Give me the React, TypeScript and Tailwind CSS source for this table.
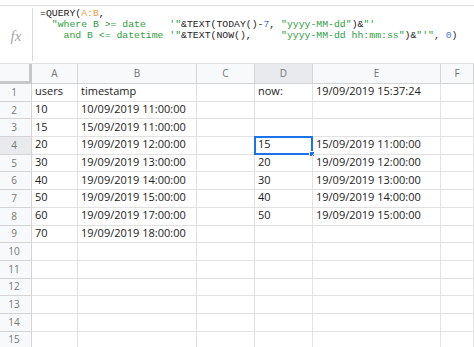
import React from 'react';

const cols = ['A', 'B', 'C', 'D', 'E', 'F'];

const rows: string[][] = [
    ['users', 'timestamp', '', 'now:', '19/09/2019 15:37:24', ''],
    ['10', '10/09/2019 11:00:00', '', '', '', ''],
    ['15', '15/09/2019 11:00:00', '', '', '', ''],
    ['20', '19/09/2019 12:00:00', '', '15', '15/09/2019 11:00:00', ''],
    ['30', '19/09/2019 13:00:00', '', '20', '19/09/2019 12:00:00', ''],
    ['40', '19/09/2019 14:00:00', '', '30', '19/09/2019 13:00:00', ''],
    ['50', '19/09/2019 15:00:00', '', '40', '19/09/2019 14:00:00', ''],
    ['60', '19/09/2019 17:00:00', '', '50', '19/09/2019 15:00:00', ''],
    ['70', '19/09/2019 18:00:00', '', '', '', ''],
    ['', '', '', '', '', ''],
    ['', '', '', '', '', ''],
    ['', '', '', '', '', ''],
    ['', '', '', '', '', ''],
    ['', '', '', '', '', ''],
    ['', '', '', '', '', ''],
];

const FormulaBar = () => (
    <div className="flex h-[59px] border-y border-[#e0e0e0] bg-white">
        <div className="w-[32px] flex items-center justify-center pt-[4px]">
            <span className="text-[#a6a6a6] italic text-[15px] font-['Liberation_Serif',serif]">fx</span>
        </div>
        <div className="my-[2px] border-l border-[#dadada]" />
        <pre className="pl-[7px] pt-[2px] text-[9.8px] leading-[11px] font-['Liberation_Mono',monospace] text-[#222]">
            {'=QUERY('}<span className="text-[#f29b38]">A:B</span>{','}
            {'\n'}
            <span className="text-[#2f9e44]">{'  "where B >= date    \'"'}</span>
            {'&TEXT(TODAY()-'}<span className="text-[#4a73d6]">7</span>{', '}
            <span className="text-[#2f9e44]">{'"yyyy-MM-dd"'}</span>{')&'}
            <span className="text-[#2f9e44]">{'"\''}</span>
            {'\n'}
            <span className="text-[#2f9e44]">{'    and B <= datetime \'"'}</span>
            {'&TEXT(NOW(),     '}
            <span className="text-[#2f9e44]">{'"yyyy-MM-dd hh:mm:ss"'}</span>{')&'}
            <span className="text-[#2f9e44]">{'"\'"'}</span>{', '}
            <span className="text-[#4a73d6]">0</span>{')'}
        </pre>
    </div>
);

export default function App() {
    return (
        <div className="w-[474px] h-[347px] overflow-hidden bg-white pt-[5px]">
            <FormulaBar />
            <div className="grid grid-cols-[32px_46px_119px_58px_58px_128px_1fr] grid-rows-[20px_repeat(15,17.7px)] font-['Open_Sans',sans-serif]">
                {/* corner */}
                <div className="bg-[#f8f9fa] border-r-[3px] border-b-[3px] border-[#c6c8ca]" />
                {cols.map((c) => (
                    <div
                        key={c}
                        className={`flex items-center justify-center text-[10px] text-[#777] border-r border-b border-[#d4d4d4] ${c === 'D' ? 'bg-[#e8eaed]' : 'bg-[#f8f9fa]'}`}
                    >
                        {c}
                    </div>
                ))}
                {rows.map((r, i) => (
                    <React.Fragment key={i}>
                        <div
                            className={`flex items-center justify-center pr-[3px] text-[10px] text-[#777] border-r border-b border-[#d4d4d4] ${i === 3 ? 'bg-[#e8eaed]' : 'bg-[#f8f9fa]'}`}
                        >
                            {i + 1}
                        </div>
                        {r.map((v, j) => (
                            <div
                                key={j}
                                className="relative flex items-end pb-[1px] pl-[3px] text-[11px] text-[#222] whitespace-nowrap border-r border-b border-[#e2e2e2]"
                            >
                                {v}
                                {i === 3 && j === 3 && (
                                    <>
                                        <div className="absolute -left-px -top-px right-[-1px] bottom-[-1px] border-2 border-[#1a73e8]" />
                                        <div className="absolute right-[-3px] bottom-[-3px] w-[6px] h-[6px] bg-[#1a73e8] border border-white" />
                                    </>
                                )}
                            </div>
                        ))}
                    </React.Fragment>
                ))}
            </div>
        </div>
    );
}
